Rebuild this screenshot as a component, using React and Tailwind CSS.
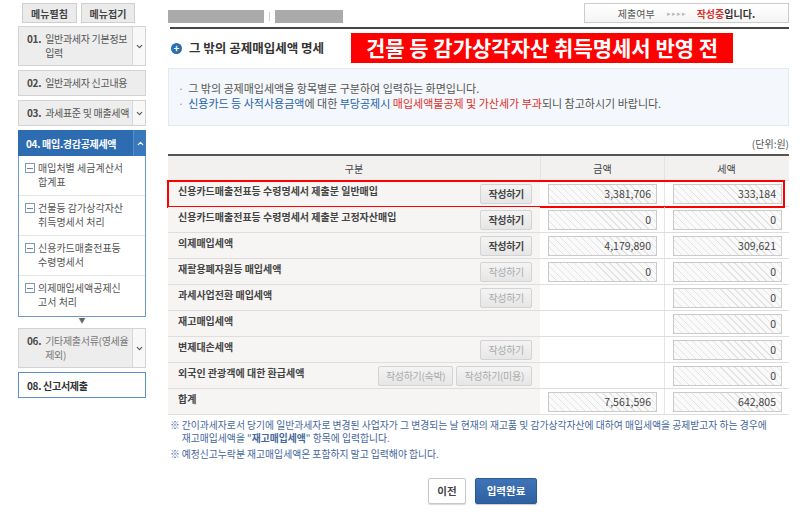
import { ChevronDown, ChevronUp } from "lucide-react";

const hatch = "bg-[image:repeating-linear-gradient(45deg,#e4e4e4_0px,#e4e4e4_1px,#fafafa_1px,#fafafa_5px)]";

const rows = [
  { label: "신용카드매출전표등 수령명세서 제출분 일반매입", btns: ["작성하기"], on: true, amt: "3,381,706", tax: "333,184", mark: true },
  { label: "신용카드매출전표등 수령명세서 제출분 고정자산매입", btns: ["작성하기"], on: true, amt: "0", tax: "0" },
  { label: "의제매입세액", btns: ["작성하기"], on: true, amt: "4,179,890", tax: "309,621" },
  { label: "재활용폐자원등 매입세액", btns: ["작성하기"], amt: "0", tax: "0" },
  { label: "과세사업전환 매입세액", btns: ["작성하기"], tax: "0" },
  { label: "재고매입세액", btns: [], tax: "0" },
  { label: "변제대손세액", btns: ["작성하기"], tax: "0" },
  { label: "외국인 관광객에 대한 환급세액", btns: ["작성하기(숙박)", "작성하기(미용)"], tax: "0" },
  { label: "합계", btns: [], amt: "7,561,596", tax: "642,805" },
];

function SideItem({ num, lines, chevron, dim }) {
  return (
    <div className="flex border border-[#d3d3d3] bg-[#ededed]">
      <div className="flex flex-1 overflow-hidden whitespace-nowrap px-[8px] py-[5px] text-[10px] leading-[14px] tracking-[-0.3px]">
        <span className="mr-[4px] font-bold text-[#4a4a4a]">{num}</span>
        <span className={dim ? "text-[#777]" : "text-[#555]"}>
          {lines.map((l, i) => (
            <span key={i} className="block">{l}</span>
          ))}
        </span>
      </div>
      {chevron && (
        <div className="flex w-[13px] shrink-0 items-center justify-center border-l border-[#d8d8d8] bg-[#f8f8f8]">
          <ChevronDown size={9} strokeWidth={3} color="#555" />
        </div>
      )}
    </div>
  );
}

function SubItem({ lines }) {
  return (
    <div className="flex h-[40px] items-start border-b border-[#e4e4e4] px-[6px] pt-[5px] text-[10px] leading-[14px] text-[#555] last:border-b-0">
      <span className="mr-[3px] mt-[2px] flex h-[10px] w-[10px] shrink-0 items-center justify-center border border-[#7f97b8]">
        <span className="h-[1px] w-[6px] bg-[#6b84a8]" />
      </span>
      <span>
        {lines.map((l, i) => (
          <span key={i} className="block">{l}</span>
        ))}
      </span>
    </div>
  );
}

function Amount({ value }) {
  return (
    <div className={`h-[20px] w-[109px] border border-[#cacaca] ${hatch} pr-[5px] text-right text-[10.5px] leading-[18px] text-[#444]`}>
      {value}
    </div>
  );
}

function WriteBtn({ text, on }) {
  return (
    <button
      className={`h-[20px] rounded-[2px] border border-[#d3d3d3] bg-[linear-gradient(#f4f4f4,#e6e6e6)] px-[7px] text-[10px] leading-[18px] tracking-[-0.3px] ${on ? "font-bold text-[#444]" : "text-[#aaa]"}`}
    >
      {text}
    </button>
  );
}

export default function App() {
  return (
    <div className="flex h-[529px] w-[800px] overflow-hidden bg-white text-[#333] [font-family:'Noto_Sans_CJK_KR',sans-serif]">
      <aside className="w-[146px] shrink-0 pl-[18px] pt-[3px]">
        <div className="flex gap-[4px] pl-[4px]">
          <button className="h-[20px] w-[55px] border border-[#cfcfcf] bg-[#ebebeb] text-[10px] font-bold text-[#444]">메뉴펼침</button>
          <button className="h-[20px] w-[54px] border border-[#cfcfcf] bg-[#ebebeb] text-[10px] font-bold text-[#444]">메뉴접기</button>
        </div>
        <div className="mt-[3px] flex flex-col gap-[4px]">
          <SideItem num="01." lines={["일반과세자 기본정보", "입력"]} chevron />
          <SideItem num="02." lines={["일반과세자 신고내용"]} />
          <SideItem num="03." lines={["과세표준 및 매출세액"]} chevron />
          <div>
            <div className="flex h-[26px] bg-[#2e6cb2]">
              <div className="flex flex-1 items-center px-[8px] text-[10px] font-bold tracking-[-0.3px] text-white">04. 매입.경감공제세액</div>
              <div className="flex w-[13px] items-center justify-center border-l border-[#5a8dc6] bg-[#3a78bd]">
                <ChevronUp size={9} strokeWidth={3} color="#fff" />
              </div>
            </div>
            <div className="border border-t-0 border-[#6d9bd0] bg-white">
              <SubItem lines={["매입처별 세금계산서", "합계표"]} />
              <SubItem lines={["건물등 감가상각자산", "취득명세서 처리"]} />
              <SubItem lines={["신용카드매출전표등", "수령명세서"]} />
              <SubItem lines={["의제매입세액공제신", "고서 처리"]} />
            </div>
            <div className="flex h-[7px] items-end justify-center text-[7px] leading-none text-[#666]">▼</div>
          </div>
          <SideItem num="06." lines={["기타제출서류(영세율", "제외)"]} chevron dim />
          <div className="flex h-[26px] items-center border border-[#5b8fd0] bg-white px-[8px] text-[10px] font-bold tracking-[-0.3px] text-[#333]">08. 신고서제출</div>
        </div>
      </aside>

      <main className="ml-[22px] w-[621px] pt-[3px]">
        <div className="flex h-[20px] items-end justify-between">
          <div className="flex items-center">
            <div className="h-[13px] w-[96px] bg-[#aaaaaa]" />
            <span className="mx-[5px] h-[9px] w-px bg-[#cfcfcf]" />
            <div className="h-[13px] w-[68px] bg-[#aaaaaa]" />
          </div>
          <div className="flex h-[20px] w-[205px] items-center justify-center border border-[#cccccc] bg-[linear-gradient(#ffffff,#f4f4f4)] text-[10px]">
            <span className="text-[#555]">제출여부</span>
            <span className="ml-[12px] mr-[10px] text-[7px] tracking-[1px] text-[#bbb]">▸▸▸▸</span>
            <span className="font-bold text-[#d8322c]">작성중</span>
            <span className="font-bold text-[#333]">입니다.</span>
          </div>
        </div>
        <div className="mt-[4px] ml-[2px] h-[2px] bg-[#454545]" />

        <div className="mt-[4px] flex h-[30px] items-center">
          <span className="ml-[3px] flex h-[11px] w-[11px] items-center justify-center rounded-full bg-[#2a6db0]">
            <span className="text-[10px] font-bold leading-none text-white">+</span>
          </span>
          <span className="ml-[7px] text-[12.5px] font-bold text-[#333]">그 밖의 공제매입세액 명세</span>
          <div className="ml-[27px] flex h-[30px] w-[382px] items-center justify-center bg-[#ff0000] text-[21px] font-bold text-white">
            건물 등 감가상각자산 취득명세서 반영 전
          </div>
        </div>

        <div className="mt-[5px] h-[58px] border border-[#e4e9f0] bg-[#f4f7fb] pl-[9px] pt-[12px] text-[11px] leading-[15px] text-[#555]">
          <p><span className="mr-[4px] text-[#999]">·</span>그 밖의 공제매입세액을 항목별로 구분하여 입력하는 화면입니다.</p>
          <p>
            <span className="mr-[4px] text-[#999]">·</span>
            <span className="text-[#1f62a8]">신용카드 등 사적사용금액</span>에 대한{" "}
            <span className="text-[#1f62a8]">부당공제시</span>{" "}
            <span className="text-[#e0302a]">매입세액불공제 및 가산세가 부과</span>되니 참고하시기 바랍니다.
          </p>
        </div>

        <div className="mt-[10px] h-[16px] text-right text-[10px] text-[#555]">(단위:원)</div>

        <div className="mt-[2px] border-t-2 border-[#555] text-[10px]">
          <div className="grid h-[25px] grid-cols-[372px_124px_124px] border-b border-[#dedede] bg-[#f2f1ef] text-[#444]">
            <div className="flex items-center justify-center">구분</div>
            <div className="flex items-center justify-center border-l border-[#e2e2e2]">금액</div>
            <div className="flex items-center justify-center border-l border-[#e2e2e2]">세액</div>
          </div>
          {rows.map((r) => (
            <div key={r.label} className="relative grid h-[26px] grid-cols-[372px_124px_124px] border-b border-[#dedede]">
              <div className="flex items-center justify-between bg-[#f6f5f3] pl-[10px] pr-[8px]">
                <span className="mb-[6px] font-bold text-[#444]">{r.label}</span>
                <div className="flex gap-[3px]">
                  {r.btns.map((b) => (
                    <WriteBtn key={b} text={b} on={r.on} />
                  ))}
                </div>
              </div>
              <div className="flex items-center pl-[8px]">{r.amt && <Amount value={r.amt} />}</div>
              <div className="flex items-center border-l border-[#e6e6e6] pl-[8px]">{r.tax && <Amount value={r.tax} />}</div>
              {r.mark && <div className="absolute -left-[1px] -top-[1px] right-[4px] -bottom-[2px] border-2 border-[#ff0000]" />}
            </div>
          ))}
        </div>

        <div className="mt-[4px] pl-[2px] text-[9.8px] leading-[13px] text-[#45679c]">
          <p className="flex">
            <span className="mr-[2px]">※</span>
            <span>
              간이과세자로서 당기에 일반과세자로 변경된 사업자가 그 변경되는 날 현재의 재고품 및 감가상각자산에 대하여 매입세액을 공제받고자 하는 경우에
              <br />
              재고매입세액을 "<b>재고매입세액</b>" 항목에 입력합니다.
            </span>
          </p>
          <p className="mt-[3px] flex">
            <span className="mr-[2px]">※</span>
            <span>예정신고누락분 재고매입세액은 포함하지 말고 입력해야 합니다.</span>
          </p>
        </div>

        <div className="mt-[17px] flex justify-center gap-[9px] pl-[8px]">
          <button className="h-[26px] w-[38px] rounded-[2px] border border-[#c8c8c8] bg-white text-[10.5px] font-bold text-[#444] shadow-[0_1px_1px_rgba(0,0,0,0.15)]">이전</button>
          <button className="h-[26px] w-[62px] rounded-[2px] border border-[#2b5a96] bg-[linear-gradient(#3f74b8,#2f619f)] text-[10.5px] font-bold text-white shadow-[0_1px_1px_rgba(0,0,0,0.2)]">입력완료</button>
        </div>
      </main>
    </div>
  );
}
